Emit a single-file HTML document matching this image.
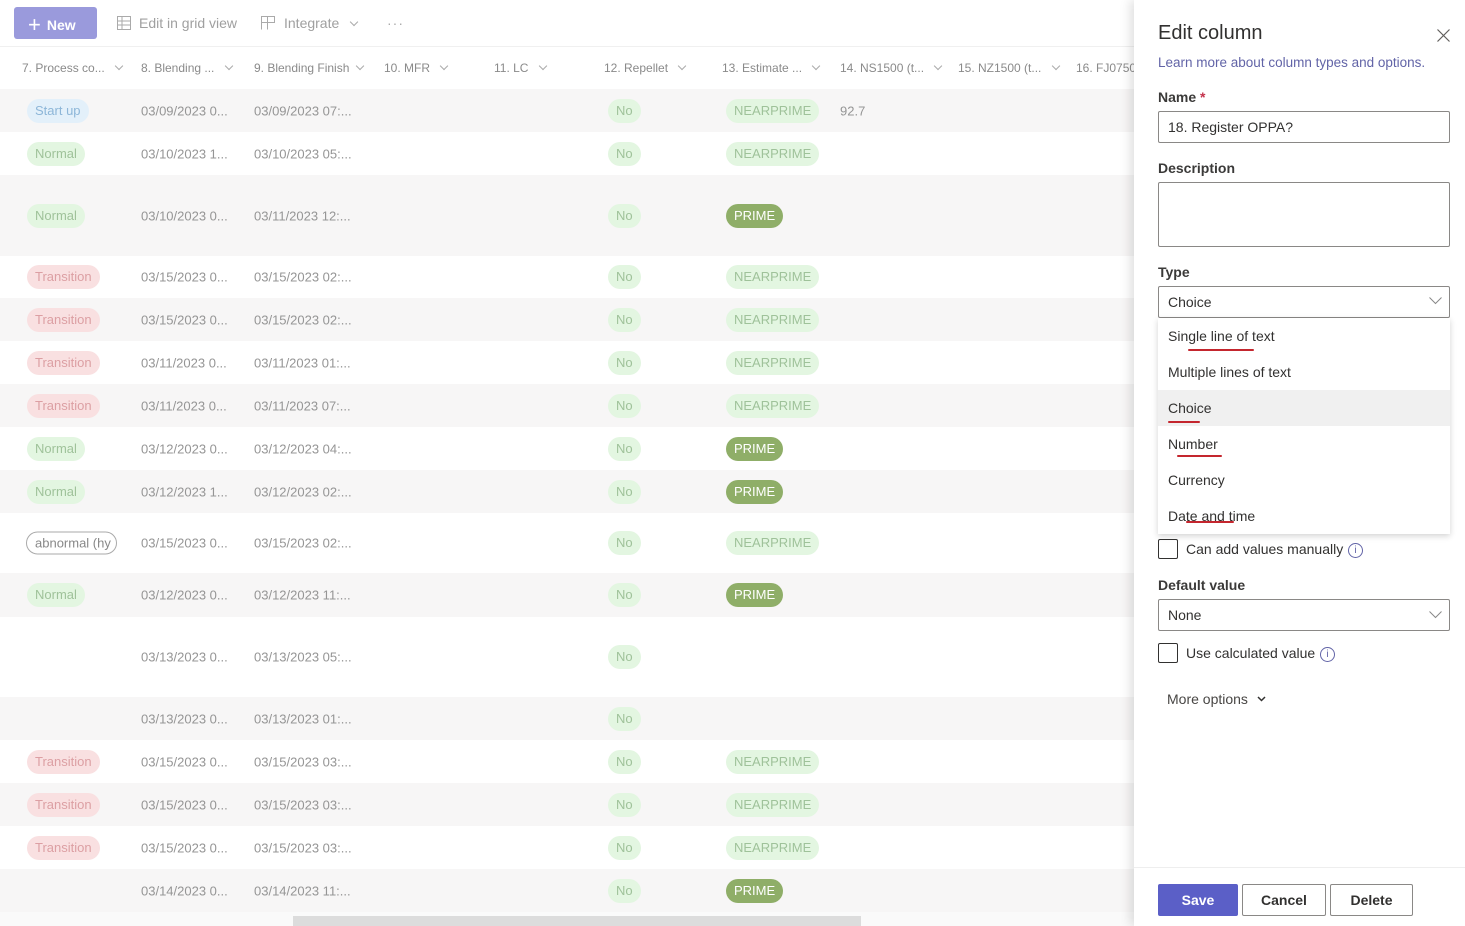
<!DOCTYPE html>
<html><head><meta charset="utf-8"><style>
*{box-sizing:border-box;margin:0;padding:0}
body{width:1465px;height:926px;position:relative;overflow:hidden;background:#fff;font-family:"Liberation Sans",sans-serif;color:#999;font-size:13px}
.a{position:absolute}
.row{position:absolute;left:0;width:1134px}
.g{background:#f7f6f6}
.t{position:absolute;top:50%;transform:translateY(-50%);white-space:nowrap;font-size:13px;color:#959595}
.pill{position:absolute;top:50%;transform:translateY(-50%);height:24px;line-height:24px;border-radius:12px;padding:0 8px;font-size:13px;white-space:nowrap}
.gr{background:#e3f6e1;color:#9fc29a}
.rd{background:#f9e0e1;color:#dc9fa3}
.bl{background:#e3f0fa;color:#8db6d8}
.pr{background:#8fae68;color:#fff}
.hd{position:absolute;top:47px;height:42px;font-size:12px;color:#8a8a8a;line-height:42px;white-space:nowrap}
.chev{display:inline-block;width:6px;height:6px;border-right:1px solid #aaa;border-bottom:1px solid #aaa;transform:rotate(45deg);margin-left:8px;position:relative;top:-3px}
.p{color:#323130}
.lbl{position:absolute;left:1158px;font-weight:bold;font-size:14px;color:#3b3a39}
.box{position:absolute;left:1158px;width:292px;border:1px solid #8a8886;border-radius:2px;background:#fff}
.opt{position:absolute;left:1158px;width:292px;height:36px;line-height:36px;padding-left:10px;font-size:14px;color:#323130}
.ul{position:absolute;height:2px;background:#c4262e;border-radius:1px}
.cb{position:absolute;left:1158px;width:20px;height:20px;border:1px solid #323130;border-radius:2px}
.info{position:absolute;width:15px;height:15px;border:1px solid #6264a7;border-radius:50%;font-size:10px;color:#6264a7;text-align:center;line-height:13px}
.btn{position:absolute;top:884px;height:32px;line-height:30px;text-align:center;font-weight:bold;font-size:14px;border:1px solid #8a8886;color:#323130;background:#fff;border-radius:2px}
</style></head><body>
<div class="a" style="left:14px;top:7px;width:83px;height:32px;background:#9a9adc;border-radius:3px;color:#fff;font-weight:bold;font-size:14px;line-height:32px;padding-left:14px"><span style="font-size:22px;font-weight:normal;position:relative;top:2px;margin-right:6px">+</span>New</div>
<svg class="a" style="left:117px;top:16px" width="14" height="14"><rect x="0.5" y="0.5" width="13" height="13" fill="none" stroke="#aaa"/><path d="M0 5h14M0 9h14M5 0v14" stroke="#aaa"/></svg>
<div class="a" style="left:139px;top:15px;font-size:14px;color:#a0a0a0">Edit in grid view</div>
<svg class="a" style="left:261px;top:16px" width="14" height="14"><path d="M0.5 0.5h13v6h-13zM0.5 6.5v7M6.5 6.5v7M6.5 0.5v6" fill="none" stroke="#aaa"/></svg>
<div class="a" style="left:284px;top:15px;font-size:14px;color:#a0a0a0">Integrate <span class="chev"></span></div>
<div class="a" style="left:387px;top:15px;font-size:14px;color:#aaa;letter-spacing:1px">···</div>
<div class="a" style="left:0;top:46px;width:1134px;height:1px;background:#f0f0f0"></div>
<div class="hd" style="left:22px">7. Process co... <span class="chev"></span></div>
<div class="hd" style="left:141px">8. Blending ... <span class="chev"></span></div>
<div class="hd" style="left:254px">9. Blending Finish<span class="chev"></span></div>
<div class="hd" style="left:384px">10. MFR <span class="chev"></span></div>
<div class="hd" style="left:494px">11. LC <span class="chev"></span></div>
<div class="hd" style="left:604px">12. Repellet <span class="chev"></span></div>
<div class="hd" style="left:722px">13. Estimate ... <span class="chev"></span></div>
<div class="hd" style="left:840px">14. NS1500 (t... <span class="chev"></span></div>
<div class="hd" style="left:958px">15. NZ1500 (t... <span class="chev"></span></div>
<div class="hd" style="left:1076px">16. FJ0750</div>

<div class="row g" style="top:89px;height:43px"><span class="pill bl" style="left:27px">Start up</span><span class="t" style="left:141px">03/09/2023 0...</span><span class="t" style="left:254px">03/09/2023 07:...</span><span class="pill gr" style="left:608px">No</span><span class="pill gr" style="left:726px">NEARPRIME</span><span class="t" style="left:840px">92.7</span></div>
<div class="row" style="top:132px;height:43px"><span class="pill gr" style="left:27px">Normal</span><span class="t" style="left:141px">03/10/2023 1...</span><span class="t" style="left:254px">03/10/2023 05:...</span><span class="pill gr" style="left:608px">No</span><span class="pill gr" style="left:726px">NEARPRIME</span></div>
<div class="row g" style="top:175px;height:81px"><span class="pill gr" style="left:27px">Normal</span><span class="t" style="left:141px">03/10/2023 0...</span><span class="t" style="left:254px">03/11/2023 12:...</span><span class="pill gr" style="left:608px">No</span><span class="pill pr" style="left:726px">PRIME</span></div>
<div class="row" style="top:256px;height:42px"><span class="pill rd" style="left:27px">Transition</span><span class="t" style="left:141px">03/15/2023 0...</span><span class="t" style="left:254px">03/15/2023 02:...</span><span class="pill gr" style="left:608px">No</span><span class="pill gr" style="left:726px">NEARPRIME</span></div>
<div class="row g" style="top:298px;height:43px"><span class="pill rd" style="left:27px">Transition</span><span class="t" style="left:141px">03/15/2023 0...</span><span class="t" style="left:254px">03/15/2023 02:...</span><span class="pill gr" style="left:608px">No</span><span class="pill gr" style="left:726px">NEARPRIME</span></div>
<div class="row" style="top:341px;height:43px"><span class="pill rd" style="left:27px">Transition</span><span class="t" style="left:141px">03/11/2023 0...</span><span class="t" style="left:254px">03/11/2023 01:...</span><span class="pill gr" style="left:608px">No</span><span class="pill gr" style="left:726px">NEARPRIME</span></div>
<div class="row g" style="top:384px;height:43px"><span class="pill rd" style="left:27px">Transition</span><span class="t" style="left:141px">03/11/2023 0...</span><span class="t" style="left:254px">03/11/2023 07:...</span><span class="pill gr" style="left:608px">No</span><span class="pill gr" style="left:726px">NEARPRIME</span></div>
<div class="row" style="top:427px;height:43px"><span class="pill gr" style="left:27px">Normal</span><span class="t" style="left:141px">03/12/2023 0...</span><span class="t" style="left:254px">03/12/2023 04:...</span><span class="pill gr" style="left:608px">No</span><span class="pill pr" style="left:726px">PRIME</span></div>
<div class="row g" style="top:470px;height:43px"><span class="pill gr" style="left:27px">Normal</span><span class="t" style="left:141px">03/12/2023 1...</span><span class="t" style="left:254px">03/12/2023 02:...</span><span class="pill gr" style="left:608px">No</span><span class="pill pr" style="left:726px">PRIME</span></div>
<div class="row" style="top:513px;height:60px"><span class="pill" style="left:26px;width:91px;border:1px solid #aaa;color:#888;overflow:hidden;height:23px;line-height:21px">abnormal (hy</span><span class="t" style="left:141px">03/15/2023 0...</span><span class="t" style="left:254px">03/15/2023 02:...</span><span class="pill gr" style="left:608px">No</span><span class="pill gr" style="left:726px">NEARPRIME</span></div>
<div class="row g" style="top:573px;height:44px"><span class="pill gr" style="left:27px">Normal</span><span class="t" style="left:141px">03/12/2023 0...</span><span class="t" style="left:254px">03/12/2023 11:...</span><span class="pill gr" style="left:608px">No</span><span class="pill pr" style="left:726px">PRIME</span></div>
<div class="row" style="top:617px;height:80px"><span class="t" style="left:141px">03/13/2023 0...</span><span class="t" style="left:254px">03/13/2023 05:...</span><span class="pill gr" style="left:608px">No</span></div>
<div class="row g" style="top:697px;height:43px"><span class="t" style="left:141px">03/13/2023 0...</span><span class="t" style="left:254px">03/13/2023 01:...</span><span class="pill gr" style="left:608px">No</span></div>
<div class="row" style="top:740px;height:43px"><span class="pill rd" style="left:27px">Transition</span><span class="t" style="left:141px">03/15/2023 0...</span><span class="t" style="left:254px">03/15/2023 03:...</span><span class="pill gr" style="left:608px">No</span><span class="pill gr" style="left:726px">NEARPRIME</span></div>
<div class="row g" style="top:783px;height:43px"><span class="pill rd" style="left:27px">Transition</span><span class="t" style="left:141px">03/15/2023 0...</span><span class="t" style="left:254px">03/15/2023 03:...</span><span class="pill gr" style="left:608px">No</span><span class="pill gr" style="left:726px">NEARPRIME</span></div>
<div class="row" style="top:826px;height:43px"><span class="pill rd" style="left:27px">Transition</span><span class="t" style="left:141px">03/15/2023 0...</span><span class="t" style="left:254px">03/15/2023 03:...</span><span class="pill gr" style="left:608px">No</span><span class="pill gr" style="left:726px">NEARPRIME</span></div>
<div class="row g" style="top:869px;height:43px"><span class="t" style="left:141px">03/14/2023 0...</span><span class="t" style="left:254px">03/14/2023 11:...</span><span class="pill gr" style="left:608px">No</span><span class="pill pr" style="left:726px">PRIME</span></div>
<div class="a" style="left:0;top:912px;width:1134px;height:14px;background:#fafafa"></div>
<div class="a" style="left:293px;top:916px;width:568px;height:10px;background:#dcdcdc"></div>

<div class="a" style="left:1134px;top:0;width:331px;height:926px;background:#fff;box-shadow:-4px 0 10px rgba(0,0,0,0.12)"></div>
<div class="a p" style="left:1158px;top:22px;font-size:20px;color:#323130">Edit column</div>
<svg class="a" style="left:1437px;top:29px" width="13" height="13"><path d="M0.5 0.5L12.5 12.5M12.5 0.5L0.5 12.5" stroke="#605e5c" stroke-width="1.2"/></svg>
<div class="a" style="left:1158px;top:55px;font-size:13.5px;color:#6264a7">Learn more about column types and options.</div>
<div class="lbl" style="top:89px">Name <span style="color:#c4314b">*</span></div>
<div class="box" style="top:111px;height:32px;padding:7px 9px;font-size:14px;color:#323130">18. Register OPPA?</div>
<div class="lbl" style="top:160px">Description</div>
<div class="box" style="top:182px;height:65px"></div>
<div class="lbl" style="top:264px">Type</div>
<div class="box" style="top:286px;height:32px;padding:7px 9px;font-size:14px;color:#323130">Choice</div>
<svg class="a" style="left:1429px;top:297px" width="13" height="8"><path d="M0.5 0.5L6.5 6.5L12.5 0.5" fill="none" stroke="#888"/></svg>
<div class="a" style="left:1158px;top:318px;width:292px;height:216px;background:#fff;box-shadow:0 2px 6px rgba(0,0,0,0.18)"></div>
<div class="opt" style="top:318px">Single line of text</div>
<div class="opt" style="top:354px">Multiple lines of text</div>
<div class="opt" style="top:390px;background:#f0f0f0">Choice</div>
<div class="opt" style="top:426px">Number</div>
<div class="opt" style="top:462px">Currency</div>
<div class="opt" style="top:498px">Date and time</div>
<div class="ul" style="left:1188px;top:349px;width:66px"></div>
<div class="ul" style="left:1168px;top:421px;width:32px"></div>
<div class="ul" style="left:1177px;top:455px;width:45px"></div>
<div class="ul" style="left:1186px;top:521px;width:48px"></div>
<div class="cb" style="top:539px"></div>
<div class="a" style="left:1186px;top:541px;font-size:14px;color:#323130">Can add values manually</div>
<div class="info" style="left:1348px;top:543px">i</div>
<div class="lbl" style="top:577px">Default value</div>
<div class="box" style="top:599px;height:32px;padding:7px 9px;font-size:14px;color:#323130">None</div>
<svg class="a" style="left:1429px;top:611px" width="13" height="8"><path d="M0.5 0.5L6.5 6.5L12.5 0.5" fill="none" stroke="#888"/></svg>
<div class="cb" style="top:643px"></div>
<div class="a" style="left:1186px;top:645px;font-size:14px;color:#323130">Use calculated value</div>
<div class="info" style="left:1320px;top:647px">i</div>
<div class="a" style="left:1167px;top:691px;font-size:14px;color:#484644">More options</div>
<svg class="a" style="left:1257px;top:696px" width="9" height="6"><path d="M1 1L4.5 4.5L8 1" fill="none" stroke="#323130" stroke-width="1.5"/></svg>
<div class="a" style="left:1134px;top:867px;width:331px;height:1px;background:#eee"></div>
<div class="btn" style="left:1158px;width:80px;background:#5b5fc7;border-color:#5b5fc7;color:#fff">Save</div>
<div class="btn" style="left:1242px;width:84px">Cancel</div>
<div class="btn" style="left:1330px;width:83px">Delete</div>
</body></html>
